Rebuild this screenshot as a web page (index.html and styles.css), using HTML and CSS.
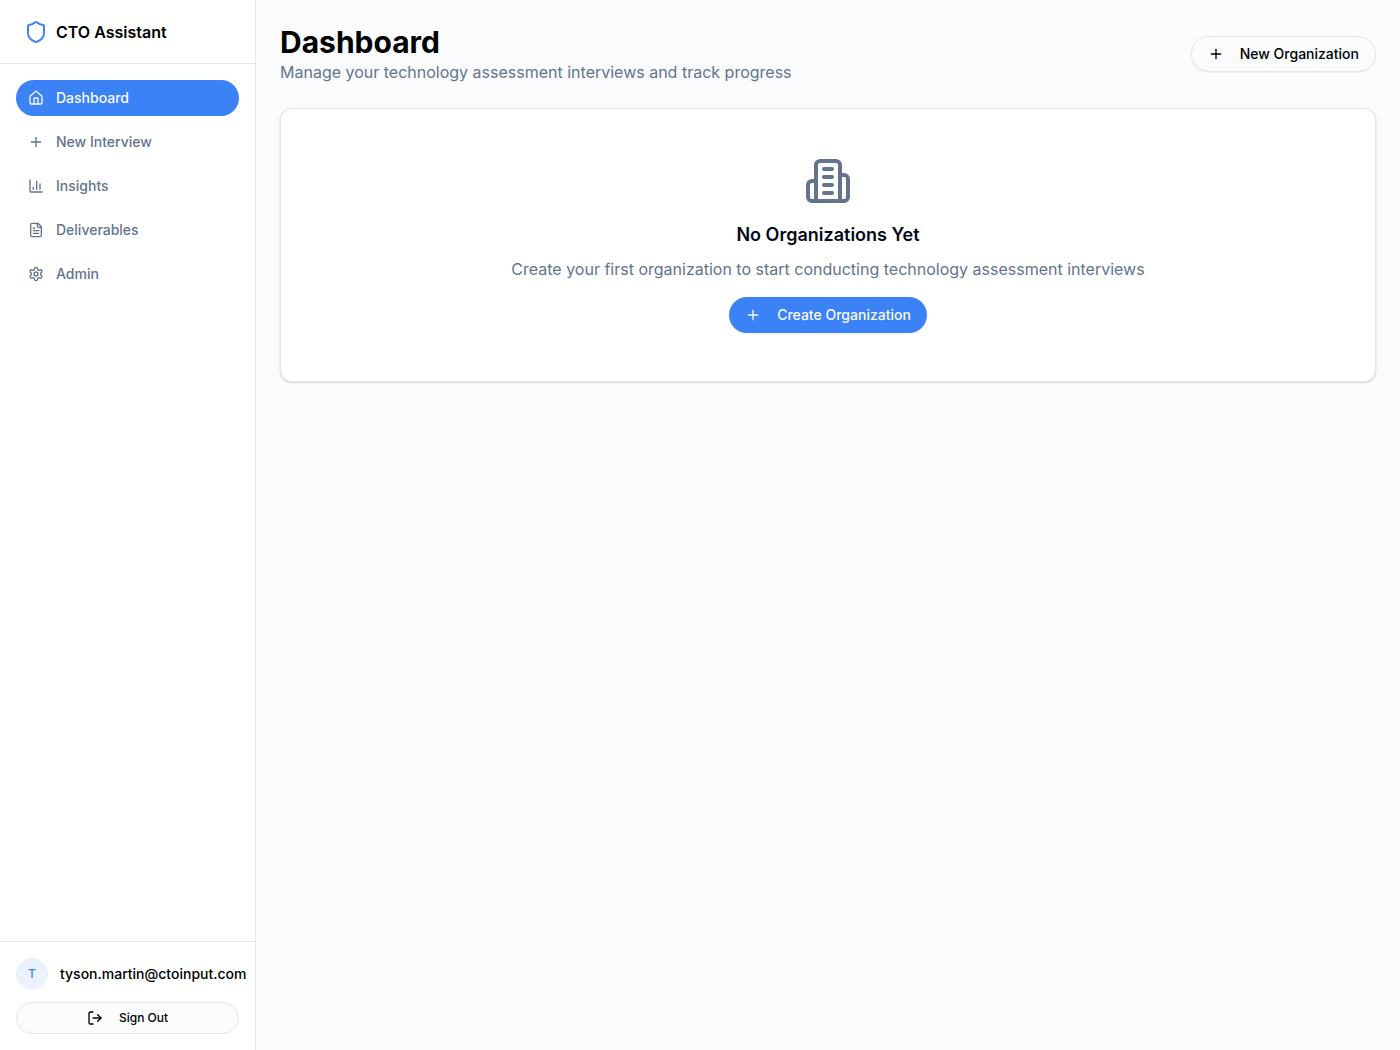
FILE: index.html
```
<!DOCTYPE html>
<html lang="en">
  <head>
    <meta charset="UTF-8" />
    <meta name="viewport" content="width=device-width, initial-scale=1.0" />
    <title>CTO Assistant</title>
    <link rel="stylesheet" href="styles.css">
  </head>
  <body>
    <div class="layout">
      <aside class="sidebar">
        <div class="brand">
          <svg class="icon icon-md" viewBox="0 0 24 24">
            <path d="M20 13c0 5-3.5 7.5-7.66 8.95a1 1 0 0 1-.67-.01C7.5 20.5 4 18 4 13V6a1 1 0 0 1 1-1c2 0 4.5-1.2 6.24-2.72a1.17 1.17 0 0 1 1.52 0C14.51 3.81 17 5 19 5a1 1 0 0 1 1 1z" />
          </svg>
          <span>CTO Assistant</span>
        </div>

        <nav class="nav">
          <a href="#" class="nav-link active">
            <svg class="icon" viewBox="0 0 24 24">
              <path d="M15 21v-8a1 1 0 0 0-1-1h-4a1 1 0 0 0-1 1v8" />
              <path d="M3 10a2 2 0 0 1 .709-1.528l7-5.999a2 2 0 0 1 2.582 0l7 5.999A2 2 0 0 1 21 10v9a2 2 0 0 1-2 2H5a2 2 0 0 1-2-2z" />
            </svg>
            Dashboard
          </a>
          <a href="#" class="nav-link">
            <svg class="icon" viewBox="0 0 24 24">
              <path d="M5 12h14" />
              <path d="M12 5v14" />
            </svg>
            New Interview
          </a>
          <a href="#" class="nav-link">
            <svg class="icon" viewBox="0 0 24 24">
              <path d="M3 3v16a2 2 0 0 0 2 2h16" />
              <path d="M18 17V9" />
              <path d="M13 17V5" />
              <path d="M8 17v-3" />
            </svg>
            Insights
          </a>
          <a href="#" class="nav-link">
            <svg class="icon" viewBox="0 0 24 24">
              <path d="M15 2H6a2 2 0 0 0-2 2v16a2 2 0 0 0 2 2h12a2 2 0 0 0 2-2V7Z" />
              <path d="M14 2v4a2 2 0 0 0 2 2h4" />
              <path d="M10 9H8" />
              <path d="M16 13H8" />
              <path d="M16 17H8" />
            </svg>
            Deliverables
          </a>
          <a href="#" class="nav-link">
            <svg class="icon" viewBox="0 0 24 24">
              <path d="M12.22 2h-.44a2 2 0 0 0-2 2v.18a2 2 0 0 1-1 1.73l-.43.25a2 2 0 0 1-2 0l-.15-.08a2 2 0 0 0-2.73.73l-.22.38a2 2 0 0 0 .73 2.73l.15.1a2 2 0 0 1 1 1.72v.51a2 2 0 0 1-1 1.74l-.15.09a2 2 0 0 0-.73 2.73l.22.38a2 2 0 0 0 2.73.73l.15-.08a2 2 0 0 1 2 0l.43.25a2 2 0 0 1 1 1.73V20a2 2 0 0 0 2 2h.44a2 2 0 0 0 2-2v-.18a2 2 0 0 1 1-1.73l.43-.25a2 2 0 0 1 2 0l.15.08a2 2 0 0 0 2.73-.73l.22-.39a2 2 0 0 0-.73-2.73l-.15-.08a2 2 0 0 1-1-1.74v-.5a2 2 0 0 1 1-1.74l.15-.09a2 2 0 0 0 .73-2.73l-.22-.38a2 2 0 0 0-2.73-.73l-.15.08a2 2 0 0 1-2 0l-.43-.25a2 2 0 0 1-1-1.73V4a2 2 0 0 0-2-2z" />
              <circle cx="12" cy="12" r="3" />
            </svg>
            Admin
          </a>
        </nav>

        <div class="account">
          <div class="user">
            <span class="avatar">T</span>
            <span class="email">tyson.martin@ctoinput.com</span>
          </div>
          <button type="button" class="btn btn-outline btn-small">
            <svg class="icon" viewBox="0 0 24 24">
              <path d="M9 21H5a2 2 0 0 1-2-2V5a2 2 0 0 1 2-2h4" />
              <path d="M16 17l5-5-5-5" />
              <path d="M21 12H9" />
            </svg>
            Sign Out
          </button>
        </div>
      </aside>

      <main class="content">
        <header class="page-header">
          <div>
            <h1>Dashboard</h1>
            <p class="muted">Manage your technology assessment interviews and track progress</p>
          </div>
          <button type="button" class="btn btn-outline btn-raised">
            <svg class="icon" viewBox="0 0 24 24">
              <path d="M5 12h14" />
              <path d="M12 5v14" />
            </svg>
            New Organization
          </button>
        </header>

        <section class="card empty-state">
          <svg class="icon icon-lg" viewBox="0 0 24 24">
            <path d="M6 22V4a2 2 0 0 1 2-2h8a2 2 0 0 1 2 2v18Z" />
            <path d="M6 12H4a2 2 0 0 0-2 2v6a2 2 0 0 0 2 2h2" />
            <path d="M18 9h2a2 2 0 0 1 2 2v9a2 2 0 0 1-2 2h-2" />
            <path d="M10 6h4" />
            <path d="M10 10h4" />
            <path d="M10 14h4" />
            <path d="M10 18h4" />
          </svg>
          <h2>No Organizations Yet</h2>
          <p class="muted">Create your first organization to start conducting technology assessment interviews</p>
          <button type="button" class="btn btn-primary">
            <svg class="icon" viewBox="0 0 24 24">
              <path d="M5 12h14" />
              <path d="M12 5v14" />
            </svg>
            Create Organization
          </button>
        </section>
      </main>
    </div>
  </body>
</html>
```

FILE: styles.css
```
* {
  margin: 0;
  padding: 0;
  box-sizing: border-box;
}

body {
  font-family: Inter, "Liberation Sans", sans-serif;
  font-size: 16px;
  line-height: 24px;
  color: #000;
  background: #f9fbfd;
}

.layout {
  display: flex;
  min-height: 100vh;
}

.icon {
  width: 16px;
  height: 16px;
  flex-shrink: 0;
  fill: none;
  stroke: currentColor;
  stroke-width: 2;
  stroke-linecap: round;
  stroke-linejoin: round;
}

.icon-md {
  width: 24px;
  height: 24px;
}

.icon-lg {
  width: 48px;
  height: 48px;
}

/* Sidebar */
.sidebar {
  display: flex;
  flex-direction: column;
  flex-shrink: 0;
  width: 256px;
  background: #fff;
  border-right: 1px solid #e2e5ea;
}

.brand {
  display: flex;
  align-items: center;
  gap: 8px;
  height: 64px;
  padding: 0 24px;
  border-bottom: 1px solid #e2e5ea;
  font-weight: 600;
}

.brand .icon {
  color: #3b82f6;
}

.nav {
  display: flex;
  flex-direction: column;
  flex: 1;
  gap: 8px;
  padding: 16px;
}

.nav-link {
  display: flex;
  align-items: center;
  gap: 12px;
  padding: 8px 12px;
  border-radius: 18px;
  font-size: 14px;
  font-weight: 500;
  line-height: 20px;
  color: #64748b;
  text-decoration: none;
}

.nav-link:hover {
  background: #f1f5f9;
}

.nav-link.active {
  background: #3b82f6;
  color: #f8fafc;
}

.account {
  padding: 16px;
  border-top: 1px solid #e2e5ea;
}

.user {
  display: flex;
  align-items: center;
  gap: 12px;
  margin-bottom: 12px;
}

.avatar {
  display: flex;
  align-items: center;
  justify-content: center;
  flex-shrink: 0;
  width: 32px;
  height: 32px;
  border-radius: 50%;
  background: #ebf2fe;
  color: #3b82f6;
  font-size: 12px;
  font-weight: 500;
}

.email {
  font-size: 14px;
  font-weight: 500;
  line-height: 20px;
  white-space: nowrap;
}

/* Buttons */
.btn {
  display: inline-flex;
  align-items: center;
  justify-content: center;
  gap: 16px;
  height: 36px;
  padding: 0 16px;
  border: none;
  border-radius: 18px;
  font-family: inherit;
  font-size: 14px;
  font-weight: 500;
  line-height: 20px;
  white-space: nowrap;
  cursor: pointer;
}

.btn-primary {
  background: #3b82f6;
  color: #f8fafc;
  box-shadow: 0 1px 2px rgba(0, 0, 0, 0.05);
}

.btn-outline {
  background: #f9fbfd;
  color: #000;
  border: 1px solid #e2e5ea;
}

.btn-raised {
  box-shadow: 0 1px 2px rgba(0, 0, 0, 0.05);
}

.btn-small {
  width: 100%;
  height: 32px;
  font-size: 12px;
}

/* Page */
.content {
  flex: 1;
  min-width: 0;
  padding: 24px;
}

.page-header {
  display: flex;
  align-items: center;
  justify-content: space-between;
  margin-bottom: 24px;
}

h1 {
  font-size: 30px;
  font-weight: 700;
  line-height: 36px;
}

h2 {
  font-size: 18px;
  font-weight: 600;
  line-height: 28px;
}

.muted {
  color: #64748b;
}

.card {
  background: #fff;
  color: #020817;
  border: 1px solid #e2e5ea;
  border-radius: 12px;
  box-shadow: 0 1px 3px rgba(0, 0, 0, 0.1), 0 1px 2px rgba(0, 0, 0, 0.06);
}

.empty-state {
  display: flex;
  flex-direction: column;
  align-items: center;
  padding: 48px;
  text-align: center;
}

.empty-state .icon-lg {
  margin-bottom: 16px;
  color: #64748b;
}

.empty-state h2 {
  margin-bottom: 8px;
}

.empty-state p {
  margin-bottom: 16px;
}
```
